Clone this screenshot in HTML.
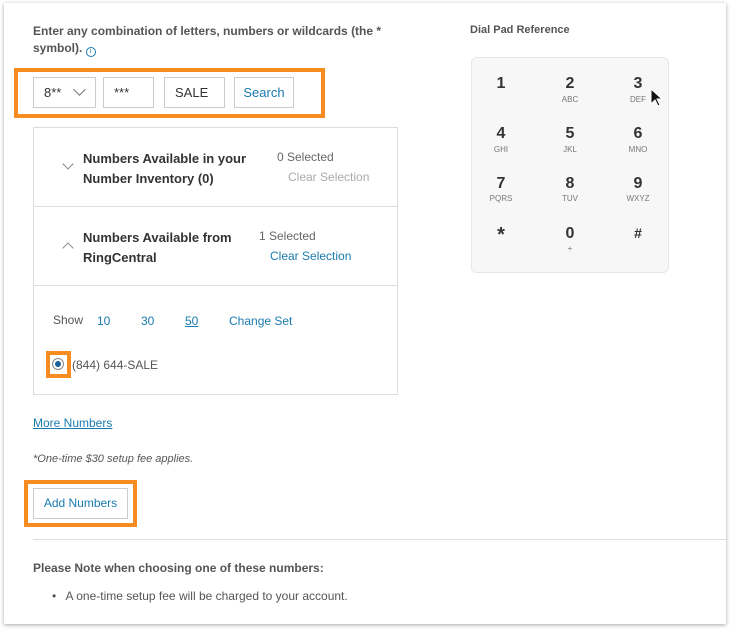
<!DOCTYPE html>
<html><head><meta charset="utf-8"><style>
*{margin:0;padding:0;box-sizing:border-box}
body{width:730px;height:630px;background:#fff;font-family:"Liberation Sans",sans-serif;position:relative;overflow:hidden;color:#444}
.card{position:absolute;left:4px;top:3px;width:722px;height:621px;background:#fff;box-shadow:0 1px 4px rgba(0,0,0,.35);}
.a{position:absolute;white-space:nowrap}
.b{font-weight:bold}
.inp{position:absolute;border:1px solid #ccc;height:31px;font-size:13px;line-height:29px;color:#333}
.blue{color:#1a7bb0}
.orange{position:absolute;border:4px solid #f68b1f}
.dg{position:absolute;width:60px;text-align:center;font-weight:bold;font-size:16px;color:#333}
.lt{position:absolute;width:60px;text-align:center;font-size:8px;color:#777}
</style></head><body>
<div class="card"></div>
<div class="a b" style="left:33px;top:23px;font-size:12px;color:#555;line-height:17px">Enter any combination of letters, numbers or wildcards (the *<br>symbol). <span style="display:inline-block;width:10px;height:10px;border:1px solid #1a7bb0;border-radius:50%;font-size:7px;line-height:8px;text-align:center;color:#1a7bb0;font-weight:normal;vertical-align:-1px">i</span></div>
<div class="orange" style="left:14px;top:68px;width:311px;height:50px"></div>
<div class="inp" style="left:33px;top:77px;width:63px;padding-left:10px">8**<span style="position:absolute;left:41px;top:7px;width:9px;height:9px;border-right:1px solid #777;border-bottom:1px solid #777;transform:rotate(45deg)"></span></div>
<div class="inp" style="left:103px;top:77px;width:51px;padding-left:10px">***</div>
<div class="inp" style="left:164px;top:77px;width:61px;padding-left:10px">SALE</div>
<div class="inp blue" style="left:234px;top:77px;width:60px;text-align:center">Search</div>
<div style="position:absolute;left:33px;top:127px;width:365px;height:268px;border:1px solid #ddd"></div>
<div style="position:absolute;left:33px;top:206px;width:365px;height:1px;background:#ddd"></div>
<div style="position:absolute;left:33px;top:285px;width:365px;height:1px;background:#ddd"></div>
<div class="a" style="left:64px;top:160px;width:8px;height:8px;border-right:1px solid #888;border-bottom:1px solid #888;transform:rotate(45deg)"></div>
<div class="a b" style="left:83px;top:149px;font-size:13px;line-height:20px;color:#333">Numbers Available in your<br>Number Inventory (0)</div>
<div class="a" style="left:277px;top:150px;font-size:12px;color:#666">0 Selected</div>
<div class="a" style="left:288px;top:170px;font-size:12px;color:#aaa">Clear Selection</div>
<div class="a" style="left:64px;top:244px;width:8px;height:8px;border-left:1px solid #888;border-top:1px solid #888;transform:rotate(45deg)"></div>
<div class="a b" style="left:83px;top:228px;font-size:13px;line-height:20px;color:#333">Numbers Available from<br>RingCentral</div>
<div class="a" style="left:259px;top:229px;font-size:12px;color:#666">1 Selected</div>
<div class="a blue" style="left:270px;top:249px;font-size:12px">Clear Selection</div>
<div class="a" style="left:53px;top:313px;font-size:12px;color:#555">Show</div>
<div class="a blue" style="left:97px;top:314px;font-size:12px">10</div>
<div class="a blue" style="left:141px;top:314px;font-size:12px">30</div>
<div class="a blue" style="left:185px;top:314px;font-size:12px;text-decoration:underline">50</div>
<div class="a blue" style="left:229px;top:314px;font-size:12px">Change Set</div>
<div class="orange" style="left:46px;top:351px;width:25px;height:27px"></div>
<div class="a" style="left:52px;top:358px;width:12px;height:12px;border:1px solid #888;border-radius:50%;background:#fff"><div style="position:absolute;left:2px;top:2px;width:6px;height:6px;border-radius:50%;background:#1a5f9a"></div></div>
<div class="a" style="left:72px;top:358px;font-size:12px;color:#555">(844) 644-SALE</div>
<div class="a blue" style="left:33px;top:416px;font-size:12px;text-decoration:underline">More Numbers</div>
<div class="a" style="left:33px;top:453px;font-size:11px;font-style:italic;color:#555">*One-time $30 setup fee applies.</div>
<div class="orange" style="left:24px;top:480px;width:113px;height:47px"></div>
<div class="a blue" style="left:33px;top:488px;width:95px;height:31px;border:1px solid #ccc;font-size:12px;line-height:29px;text-align:center">Add Numbers</div>
<div style="position:absolute;left:33px;top:539px;width:693px;height:1px;background:#ddd"></div>
<div class="a b" style="left:33px;top:561px;font-size:12px;color:#555">Please Note when choosing one of these numbers:</div>
<div class="a" style="left:52px;top:589px;font-size:12px;color:#555">•&nbsp;&nbsp; A one-time setup fee will be charged to your account.</div>
<div class="a b" style="left:470px;top:24px;font-size:11px;color:#555">Dial Pad Reference</div>
<div style="position:absolute;left:471px;top:57px;width:198px;height:216px;background:#f7f7f7;border:1px solid #e6e6e6;border-radius:6px"></div>
<div class="dg" style="left:471px;top:75px">1</div>
<div class="dg" style="left:540px;top:75px">2</div><div class="lt" style="left:540px;top:95px">ABC</div>
<div class="dg" style="left:608px;top:75px">3</div><div class="lt" style="left:608px;top:95px">DEF</div>
<div class="dg" style="left:471px;top:125px">4</div><div class="lt" style="left:471px;top:145px">GHI</div>
<div class="dg" style="left:540px;top:125px">5</div><div class="lt" style="left:540px;top:145px">JKL</div>
<div class="dg" style="left:608px;top:125px">6</div><div class="lt" style="left:608px;top:145px">MNO</div>
<div class="dg" style="left:471px;top:175px">7</div><div class="lt" style="left:471px;top:194px">PQRS</div>
<div class="dg" style="left:540px;top:175px">8</div><div class="lt" style="left:540px;top:194px">TUV</div>
<div class="dg" style="left:608px;top:175px">9</div><div class="lt" style="left:608px;top:194px">WXYZ</div>
<div class="dg" style="left:471px;top:224px;font-size:20px">*</div>
<div class="dg" style="left:540px;top:225px">0</div><div class="lt" style="left:540px;top:244px">+</div>
<div class="dg" style="left:608px;top:225px;font-size:14px">#</div>
<svg style="position:absolute;left:650px;top:88px" width="14" height="20" viewBox="0 0 14 20"><path d="M1 1 L1 16 L5 12 L8 18 L10 17 L7 11 L12 11 Z" fill="#111" stroke="#fff" stroke-width="1"/></svg>
</body></html>
